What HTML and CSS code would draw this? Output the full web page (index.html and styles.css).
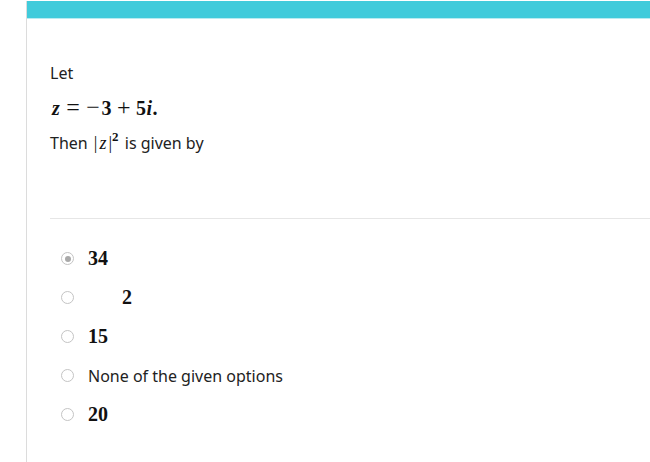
FILE: index.html
```html
<!DOCTYPE html>
<html lang="en">
<head>
    <meta charset="UTF-8">
    <meta name="viewport" content="width=device-width, initial-scale=1.0">
    <title>Question</title>
    <link rel="stylesheet" href="styles.css">
</head>
<body>
    <div class="card">
        <div class="card-bar"></div>

        <div class="question">
            <p class="line">Let</p>
            <p class="line math-line"><span class="math"><i>z</i><span class="rel">=</span><span class="neg">&minus;</span>3<span class="bin">+</span>5<i>i</i>.</span></p>
            <p class="line">Then <span class="math-inline">|<i>z</i>|<sup>2</sup></span> is given by</p>
        </div>

        <div class="divider"></div>

        <ul class="options">
            <li class="option">
                <span class="radio checked"></span>
                <span class="math">34</span>
            </li>
            <li class="option">
                <span class="radio"></span>
                <span class="math indent">2</span>
            </li>
            <li class="option">
                <span class="radio"></span>
                <span class="math">15</span>
            </li>
            <li class="option">
                <span class="radio"></span>
                <span class="label">None of the given options</span>
            </li>
            <li class="option">
                <span class="radio"></span>
                <span class="math">20</span>
            </li>
        </ul>
    </div>
</body>
</html>
```

FILE: styles.css
```css
body {
    margin: 0;
    background: white;
    font-family: "Noto Sans", "Open Sans", sans-serif;
    color: #222;
}

.card {
    margin: 1px 0 0 26px;
    border-left: 1px solid #dcdcdc;
    min-height: 461px;
}

.card-bar {
    height: 17px;
    background: #41cbdb;
    border-bottom: 1px solid #b9ebf1;
}

.question {
    padding: 43px 0 0 23px;
    height: 156px;
}

.line {
    margin: 0;
    font-size: 16px;
    line-height: 22px;
}

.line + .line {
    margin-top: 12px;
}

.math-line {
    margin-top: 11px;
    padding-left: 2px;
}

.math,
.math-inline {
    font-family: "Liberation Serif", "DejaVu Serif", serif;
    font-weight: bold;
    font-size: 20px;
    color: #111;
}

.math-line .math {
    letter-spacing: 0.5px;
}

.rel {
    margin: 0 6px;
    font-size: 24px;
    font-weight: normal;
}

.neg {
    font-size: 24px;
    font-weight: normal;
    margin-right: 1px;
}

.bin {
    margin: 0 5px;
    font-size: 24px;
    font-weight: normal;
}

.math-inline {
    font-weight: normal;
    font-size: 18px;
    margin: 0 2px;
}

.math-inline i {
    padding: 0 2px;
}

.math-inline sup {
    font-size: 13px;
    font-weight: bold;
    vertical-align: 8px;
    line-height: 0;
}

.divider {
    margin-left: 23px;
    border-top: 1px solid #e6e6e6;
}

.options {
    list-style: none;
    margin: 0;
    padding: 20px 0 0 34px;
}

.option {
    display: flex;
    align-items: center;
    height: 39px;
}

.radio {
    width: 11px;
    height: 11px;
    border: 1.5px solid #c4c4c4;
    border-radius: 50%;
    margin-right: 14px;
    display: flex;
    align-items: center;
    justify-content: center;
    box-sizing: content-box;
}

.radio.checked::after {
    content: "";
    width: 6px;
    height: 6px;
    border-radius: 50%;
    background: #a9a9a9;
}

.indent {
    padding-left: 34px;
}

.label {
    font-size: 16px;
}
```
